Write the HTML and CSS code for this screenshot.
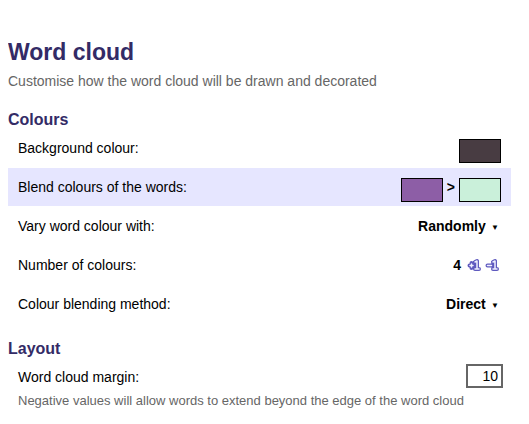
FILE: index.html
```html
<!DOCTYPE html>
<html lang="en">
<head>
<meta charset="UTF-8">
<title>Word cloud</title>
<meta name="viewport" content="width=device-width, initial-scale=1.0">
<link rel="stylesheet" href="styles.css">
</head>
<body>
<h1>Word cloud</h1>
<p class="intro">Customise how the word cloud will be drawn and decorated</p>

<h2>Colours</h2>
<div class="row">
<label for="background">Background colour:</label>
<div class="control">
<input type="color" id="background" class="swatch" value="#483c42">
</div>
</div>
<div class="row selected">
<label for="blendFrom">Blend colours of the words:</label>
<div class="control">
<input type="color" id="blendFrom" class="swatch" value="#8d5ea6">
<span class="to">&gt;</span>
<input type="color" id="blendTo" class="swatch" value="#caf0da" aria-label="Blend to">
</div>
</div>
<div class="row">
<label for="vary">Vary word colour with:</label>
<div class="control">
<select id="vary">
<option>Randomly</option>
</select>
<span class="arrow">▼</span>
</div>
</div>
<div class="row">
<label for="count">Number of colours:</label>
<div class="control">
<output id="count">4</output>
<button type="button" class="step" aria-label="Add a colour">
<svg width="14" height="14" viewBox="0 0 14 14">
<path class="edge" d="M4.500 5v5M2.500 7.500h4M8 4l2-1v8M8 11h4"/>
<path class="face" d="M4.500 6v3M3 7.500h3M8 4l2-1v8M8 11h4"/>
</svg>
</button>
<button type="button" class="step" aria-label="Remove a colour">
<svg width="14" height="14" viewBox="0 0 14 14">
<path class="edge" d="M2.500 7.500h4M8 4l2-1v8M8 11h4"/>
<path class="face" d="M2.500 7.500h4M8 4l2-1v8M8 11h4"/>
</svg>
</button>
</div>
</div>
<div class="row">
<label for="method">Colour blending method:</label>
<div class="control">
<select id="method">
<option>Direct</option>
</select>
<span class="arrow">▼</span>
</div>
</div>

<h2>Layout</h2>
<div class="row compact">
<label for="margin">Word cloud margin:</label>
<div class="control">
<input type="text" id="margin" class="number" value="10">
</div>
</div>
<p class="note">Negative values will allow words to extend beyond the edge of the word cloud</p>
</body>
</html>
```
FILE: styles.css
```css
body {
font-family: "Liberation Sans", Arial, sans-serif;
font-size: 14px;
line-height: 18px;
margin: 36px 18px 8px 8px;
background: white;
color: black;
}

h1, h2 {
color: #332b66;
}

h1 {
font-size: 23px;
line-height: 32px;
margin: 0;
}

h2 {
font-size: 16px;
line-height: 18px;
margin: 21px 0 0;
}

p {
margin: 0;
color: #666;
}

.intro {
margin-top: 4px;
}

.row {
display: flex;
justify-content: space-between;
height: 38px;
margin-bottom: 1px;
padding: 0 10px;
}

.row + h2 {
margin-top: 17px;
}

.row label {
padding-top: 10px;
}

.selected {
background: #e6e6ff;
}

.compact {
height: 34px;
margin: 0;
}

.control {
display: flex;
align-items: center;
font-weight: bold;
}

.swatch {
appearance: none;
width: 42px;
height: 24px;
margin: 6px 0 0;
padding: 0;
border: 1px solid black;
background: none;
}

.swatch::-webkit-color-swatch-wrapper {
padding: 0;
}

.swatch::-webkit-color-swatch {
border: 0;
border-radius: 0;
}

.to {
padding: 0 4px;
}

select {
appearance: none;
font: inherit;
color: inherit;
border: 0;
padding: 0;
background: none;
}

.arrow {
font-size: 8px;
padding: 4px 2px 0 5px;
}

.step {
display: flex;
margin-left: 4px;
padding: 0;
border: 0;
background: none;
}

output {
padding-right: 2px;
}

.step:last-child {
margin-right: 2px;
}

.step svg {
fill: none;
stroke-linejoin: round;
stroke-linecap: round;
}

.edge {
stroke: #5f5abf;
stroke-width: 4;
}

.face {
stroke: #f0f0ff;
stroke-width: 1.5;
}

.number {
box-sizing: border-box;
width: 37px;
height: 24px;
margin: 2px -2px 0 0;
padding: 0 3px;
border: 2px solid #666;
font: inherit;
font-weight: normal;
text-align: right;
}

.note {
font-size: 13px;
padding: 0 10px;
}
```
